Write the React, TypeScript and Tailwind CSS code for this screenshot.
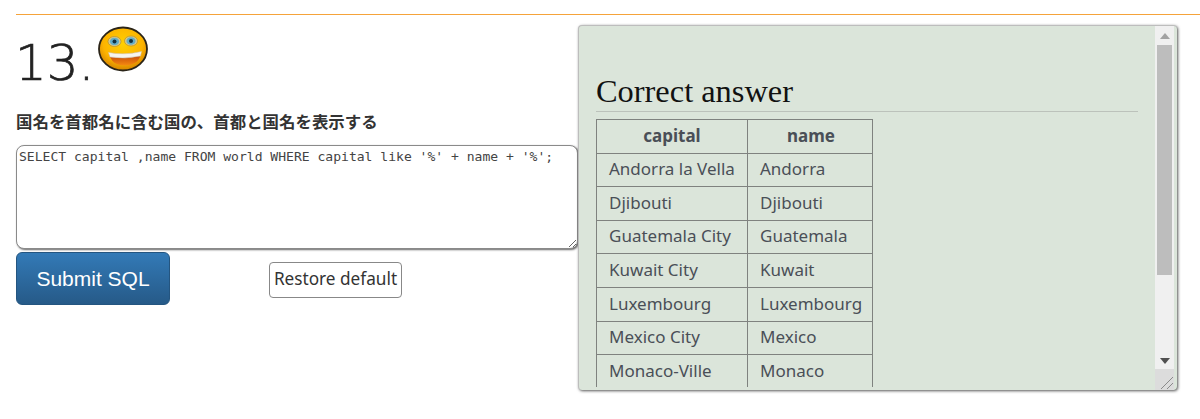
const rows = [
  ["Andorra la Vella", "Andorra"],
  ["Djibouti", "Djibouti"],
  ["Guatemala City", "Guatemala"],
  ["Kuwait City", "Kuwait"],
  ["Luxembourg", "Luxembourg"],
  ["Mexico City", "Mexico"],
  ["Monaco-Ville", "Monaco"],
];

const SQL = "SELECT capital ,name FROM world WHERE capital like '%' + name + '%';";

function Smiley() {
  return (
    <svg width="52" height="46" viewBox="0 0 52 46" className="shrink-0">
      <defs>
        <radialGradient id="face" cx="50%" cy="38%" r="68%">
          <stop offset="0%" stopColor="#ffd000" />
          <stop offset="60%" stopColor="#fdb400" />
          <stop offset="100%" stopColor="#c87400" />
        </radialGradient>
        <linearGradient id="mouth" x1="0" y1="0" x2="0" y2="1">
          <stop offset="0%" stopColor="#b5340a" />
          <stop offset="100%" stopColor="#f58a10" />
        </linearGradient>
      </defs>
      <ellipse cx="26" cy="23" rx="24" ry="21.5" fill="url(#face)" stroke="#2a2418" strokeWidth="1.8" />
      <ellipse cx="17.5" cy="15.5" rx="6.5" ry="5" fill="#d9c98a" stroke="#a9862a" strokeWidth="0.6" />
      <ellipse cx="34" cy="15" rx="6.5" ry="5" fill="#d9c98a" stroke="#a9862a" strokeWidth="0.6" />
      <ellipse cx="17.5" cy="15.5" rx="4.6" ry="3.8" fill="#63acc6" />
      <ellipse cx="34" cy="15" rx="4.6" ry="3.8" fill="#63acc6" />
      <circle cx="17.5" cy="15.5" r="2" fill="#12313f" />
      <circle cx="34" cy="15" r="2" fill="#12313f" />
      <path d="M12 27 Q28 30 44 26 Q43 39 28 39.5 Q14 39.5 12 27 Z" fill="url(#mouth)" />
      <path d="M11.5 26.5 Q28 29.5 44.5 25.5 L43.5 30 Q28 33.5 13 31 Z" fill="#f7f4ee" stroke="#c9c2b4" strokeWidth="0.5" />
    </svg>
  );
}

function FakeScrollbar() {
  return (
    <div className="flex w-[19px] shrink-0 flex-col bg-[#f0f0f0]">
      <div className="flex h-[19px] items-center justify-center">
        <svg width="10" height="6" viewBox="0 0 10 6">
          <path d="M5 0 L10 6 L0 6 Z" fill="#a3a3a3" />
        </svg>
      </div>
      <div className="mx-[2px] h-[230px] bg-[#bdbdbd]" />
      <div className="flex flex-1 items-end justify-center pb-[5px]">
        <svg width="10" height="6" viewBox="0 0 10 6">
          <path d="M0 0 L10 0 L5 6 Z" fill="#505050" />
        </svg>
      </div>
      <div className="flex h-[21px] items-end justify-end bg-[#dcdcdc]">
        <svg width="16" height="16" viewBox="0 0 16 16">
          <path d="M3 15 L15 3 M9 15 L15 9" stroke="#8a8a8a" strokeWidth="1" fill="none" />
        </svg>
      </div>
    </div>
  );
}

export default function App() {
  return (
    <div className="h-[419px] w-[1200px] overflow-hidden bg-white pt-[14px] pl-4 font-['Noto_Sans',sans-serif] text-[#333]">
      <div className="border-t border-[#f5a33a]" />
      <div className="flex">
        {/* question column */}
        <div className="w-[562px] shrink-0">
          <div className="flex h-[85px] items-start">
            <h2 className="mt-[14px] -ml-[1px] font-['DejaVu_Sans',sans-serif] text-[50px] leading-[68px] font-extralight text-[#222] [-webkit-text-stroke:0.7px_#222]">
              13.
            </h2>
            <div className="mt-[11px] ml-[2px]">
              <Smiley />
            </div>
          </div>
          <p className="h-[45px] pt-[10px] font-['Noto_Sans_CJK_JP',sans-serif] text-[16.45px] leading-[22px] font-bold text-[#333]">
            国名を首都名に含む国の、首都と国名を表示する
          </p>
          <textarea
            readOnly
            defaultValue={SQL}
            className="block h-[104px] w-[562px] resize rounded-lg border border-[#8a8a8a] bg-white px-[2px] py-[2px] font-['DejaVu_Sans_Mono',monospace] text-[13.05px] leading-[18px] text-[#444] shadow-[1px_1px_2px_#666] outline-none"
          />
          <div className="mt-[3px] flex items-start">
            <button className="h-[53px] w-[154px] rounded-md border border-[#245580] bg-gradient-to-b from-[#337ab7] to-[#265a88] font-['Liberation_Sans',sans-serif] text-[21px] leading-[50px] text-white">
              Submit SQL
            </button>
            <button className="mt-[10px] ml-[99px] h-[36px] w-[133px] rounded border border-[#888] bg-white pb-[3px] text-center text-[17.2px] leading-[22px] text-[#333]">
              Restore default
            </button>
          </div>
        </div>

        {/* answer panel */}
        <div className="mt-[10px] flex h-[365px] w-[599px] shrink-0 overflow-hidden rounded border-t border-l border-[#bdbdbd] bg-[#dbe5da] pr-[3px] shadow-[1px_1px_3px_#555]">
          <div className="h-full min-w-0 flex-1 overflow-hidden pl-[17px]">
            <h2 className="mt-[47px] mr-[17px] border-b border-[#bcc2bb] pb-[1px] font-['Liberation_Serif',serif] text-[32.4px] leading-[37px] text-[#111]">
              Correct answer
            </h2>
            <div className="mt-[7px] h-[268px] overflow-hidden">
              <table className="border-collapse text-[17px] text-[#4a4f57]">
                <thead>
                  <tr className="h-[33.6px]">
                    <th className="w-[151px] border border-[#7f827f] px-3 pb-[2px] text-center font-bold">capital</th>
                    <th className="w-[125px] border border-[#7f827f] pr-[10px] pb-[2px] pl-3 text-center font-bold">name</th>
                  </tr>
                </thead>
                <tbody>
                  {rows.map((row) => (
                    <tr key={row[0]} className="h-[33.6px]">
                      <td className="border border-[#7f827f] px-3 pb-[2px]">{row[0]}</td>
                      <td className="border border-[#7f827f] pr-[10px] pb-[2px] pl-3">{row[1]}</td>
                    </tr>
                  ))}
                </tbody>
              </table>
            </div>
          </div>
          <FakeScrollbar />
        </div>
      </div>
    </div>
  );
}
